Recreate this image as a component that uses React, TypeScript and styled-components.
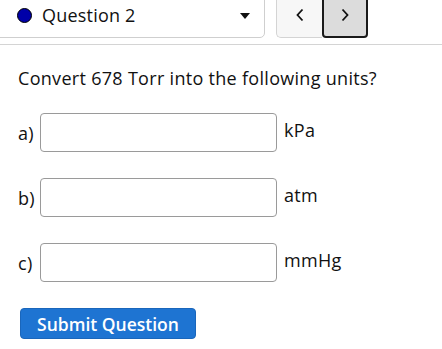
import React from "react";
import styled, { createGlobalStyle } from "styled-components";

const GlobalStyle = createGlobalStyle`
  html, body {
    margin: 0;
    padding: 0;
    background: #ffffff;
    overflow: hidden;
  }
  body {
    font-family: "Open Sans", "DejaVu Sans", sans-serif;
    color: #111;
  }
`;

const parts = [
  { id: "a", unit: "kPa" },
  { id: "b", unit: "atm" },
  { id: "c", unit: "mmHg" },
];

const Page = styled.div`
  width: 442px;
  height: 349px;
  overflow: hidden;
`;

const Header = styled.div`
  display: flex;
  align-items: stretch;
  gap: 11px;
  height: 46px;
  margin-top: -8px;
  padding-bottom: 6px;
  border-bottom: 1px solid #d4d4d4;
`;

const Select = styled.div`
  display: flex;
  align-items: center;
  width: 270px;
  margin-left: -5px;
  padding-left: 21px;
  padding-right: 14px;
  box-sizing: border-box;
  border: 1px solid #cfcfcf;
  border-radius: 0 0 5px 5px;
  font-size: 18px;
  letter-spacing: 0.2px;
`;

const Dot = styled.span`
  width: 13px;
  height: 13px;
  border-radius: 50%;
  background: #0000a8;
  border: 1px solid #000;
  margin-right: 10px;
  margin-top: 1px;
`;

const SelectText = styled.span`
  flex: 1;
`;

const Caret = styled.span`
  width: 0;
  height: 0;
  border-left: 5px solid transparent;
  border-right: 5px solid transparent;
  border-top: 6px solid #111;
  margin-top: 2px;
`;

const NavGroup = styled.div`
  display: flex;
`;

const NavButton = styled.div<{ $active?: boolean }>`
  display: flex;
  align-items: center;
  justify-content: center;
  width: 46px;
  box-sizing: border-box;
  background: ${({ $active }) => ($active ? "#dcdcdc" : "#f7f7f7")};
  border: ${({ $active }) => ($active ? "2px solid #1a1a1a" : "1px solid #d4d4d4")};
  border-right: ${({ $active }) => ($active ? "2px solid #1a1a1a" : "none")};
  border-radius: ${({ $active }) => ($active ? "0 0 4px 4px" : "0 0 0 5px")};
`;

const Body = styled.div`
  padding: 22px 18px 0 18px;
`;

const Prompt = styled.p`
  margin: 0 0 24px 0;
  font-size: 18px;
  letter-spacing: 0.3px;
  line-height: 22px;
`;

const Row = styled.div`
  display: flex;
  align-items: center;
  height: 39px;
  margin-bottom: 26px;
  font-size: 18px;
  letter-spacing: 0.3px;
`;

const Label = styled.span`
  width: 22px;
`;

const Input = styled.input`
  width: 237px;
  height: 39px;
  box-sizing: border-box;
  border: 1px solid #9a9a9a;
  border-radius: 4px;
  margin: 0 7px 0 0;
  padding: 0 6px;
  font-family: inherit;
  font-size: 16px;
`;

const Unit = styled.span`
  margin-bottom: 6px;
`;

const Submit = styled.button`
  display: block;
  margin-top: 5px;
  margin-left: 2px;
  width: 176px;
  height: 31px;
  background: #1e74d2;
  color: #fff;
  border: 1px solid #1a66bb;
  border-radius: 4px;
  font-family: inherit;
  font-size: 17.5px;
  font-weight: 600;
  padding: 0;
`;

const Chevron = ({ dir }: { dir: "left" | "right" }) => (
  <svg width="12" height="16" viewBox="0 0 12 16">
    <path
      d={dir === "left" ? "M8.5 2.5 L3.5 8 L8.5 13.5" : "M3.5 2.5 L8.5 8 L3.5 13.5"}
      fill="none"
      stroke="#111"
      strokeWidth="1.8"
    />
  </svg>
);

export default function App() {
  return (
    <Page>
      <GlobalStyle />
      <Header>
        <Select>
          <Dot />
          <SelectText>Question 2</SelectText>
          <Caret />
        </Select>
        <NavGroup>
          <NavButton>
            <Chevron dir="left" />
          </NavButton>
          <NavButton $active>
            <Chevron dir="right" />
          </NavButton>
        </NavGroup>
      </Header>
      <Body>
        <Prompt>Convert 678 Torr into the following units?</Prompt>
        {parts.map((p) => (
          <Row key={p.id}>
            <Label>{p.id})</Label>
            <Input type="text" />
            <Unit>{p.unit}</Unit>
          </Row>
        ))}
        <Submit>Submit Question</Submit>
      </Body>
    </Page>
  );
}
